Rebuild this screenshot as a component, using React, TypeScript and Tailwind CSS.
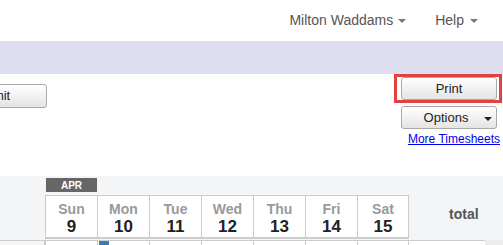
import { type FC } from "react";

const days = [
  { name: "Sun", num: "9" },
  { name: "Mon", num: "10" },
  { name: "Tue", num: "11" },
  { name: "Wed", num: "12" },
  { name: "Thu", num: "13" },
  { name: "Fri", num: "14" },
  { name: "Sat", num: "15" },
];

const Caret: FC<{ className?: string }> = ({ className }) => (
  <span
    className={`inline-block w-0 h-0 border-l-[4px] border-r-[4px] border-t-[4px] border-l-transparent border-r-transparent ${className ?? ""}`}
  />
);

const btn =
  "h-[23px] rounded-[3px] border border-[#a9a9a9] bg-gradient-to-b from-white to-[#e4e4e4] text-[13px] text-[#222] leading-none";

export default function App() {
  return (
    <div className="w-[503px] h-[245px] overflow-hidden bg-white font-['Liberation_Sans',Arial,sans-serif]">
      {/* top nav */}
      <div className="h-[41px] flex items-center justify-end pr-[25px] text-[14px] text-[#555]">
        <div className="flex items-center gap-[5px]">
          <span>Milton Waddams</span>
          <Caret className="border-t-[#777] mt-[1px]" />
        </div>
        <div className="flex items-center gap-[6px] ml-[29px]">
          <span>Help</span>
          <Caret className="border-t-[#777] mt-[1px]" />
        </div>
      </div>

      {/* band */}
      <div className="h-[33px] bg-[#dddff0]" />

      {/* toolbar */}
      <div className="h-[102px] flex justify-between">
        <div className="pt-[9px]">
          <button className={`${btn} h-[24px] w-[114px] -ml-[67px] border-[#999]`}>
            Submit
          </button>
        </div>
        <div className="flex flex-col items-end pt-[3px] pr-[3px]">
          <div className="relative mr-[3px]">
            <div className="absolute -left-[7px] -right-[5px] -top-[3px] -bottom-[3px] border-[3px] border-[#e2413e]" />
            <button className={`${btn} w-[96px] block`}>Print</button>
          </div>
          <button
            className={`${btn} w-[96px] mt-[6px] mr-[3px] relative flex items-center justify-center`}
          >
            <span className="pr-[6px]">Options</span>
            <Caret className="border-t-[#222] absolute right-[4px] top-[10px] border-l-[3px] border-r-[3px] border-t-[3px]" />
          </button>
          <a
            href="#"
            className="mt-[3px] text-[12px] leading-[14px] text-[#0000ee] underline"
          >
            More Timesheets
          </a>
        </div>
      </div>

      {/* grid */}
      <div className="bg-[#f4f5f7] h-[69px] pt-[2px]">
        <div className="grid grid-cols-[45px_repeat(7,52px)_1fr]">
          <div />
          <div className="h-[14px] ml-[1px] bg-[#666] text-white text-[10px] font-bold flex items-center justify-center">
            APR
          </div>
          <div className="col-span-7" />

          <div className="h-[3px] col-span-9" />

          <div />
          {days.map((d, i) => (
            <div
              key={d.name}
              className={`h-[44px] bg-white border-t border-b-[2px] border-l border-[#ccc] flex flex-col items-center pt-[5px] ${
                i === 6 ? "border-r" : ""
              }`}
            >
              <span className="text-[14px] leading-[16px] font-bold text-[#999]">
                {d.name}
              </span>
              <span className="text-[17px] leading-[19px] font-bold text-[#222]">
                {d.num}
              </span>
            </div>
          ))}
          <div className="h-[44px] flex items-center pl-[40px] pb-[6px] text-[14px] font-bold text-[#555]">
            total
          </div>

          <div className="h-[10px] border-t border-r border-[#ccc] mt-[1px]" />
          {days.map((d, i) => (
            <div
              key={`r-${d.name}`}
              className={`h-[10px] mt-[1px] bg-white border-l border-t border-[#ccc] ${
                i === 6 ? "border-r" : ""
              }`}
            >
              {i === 1 && <div className="ml-[1px] w-[10px] h-[8px] bg-[#3c7ab8]" />}
            </div>
          ))}
          <div className="h-[10px] mt-[1px] flex">
            <div className="w-[76px] bg-white border-t border-[#ccc]" />
            <div className="flex-1 bg-[#ececec]" />
          </div>
        </div>
      </div>
    </div>
  );
}
